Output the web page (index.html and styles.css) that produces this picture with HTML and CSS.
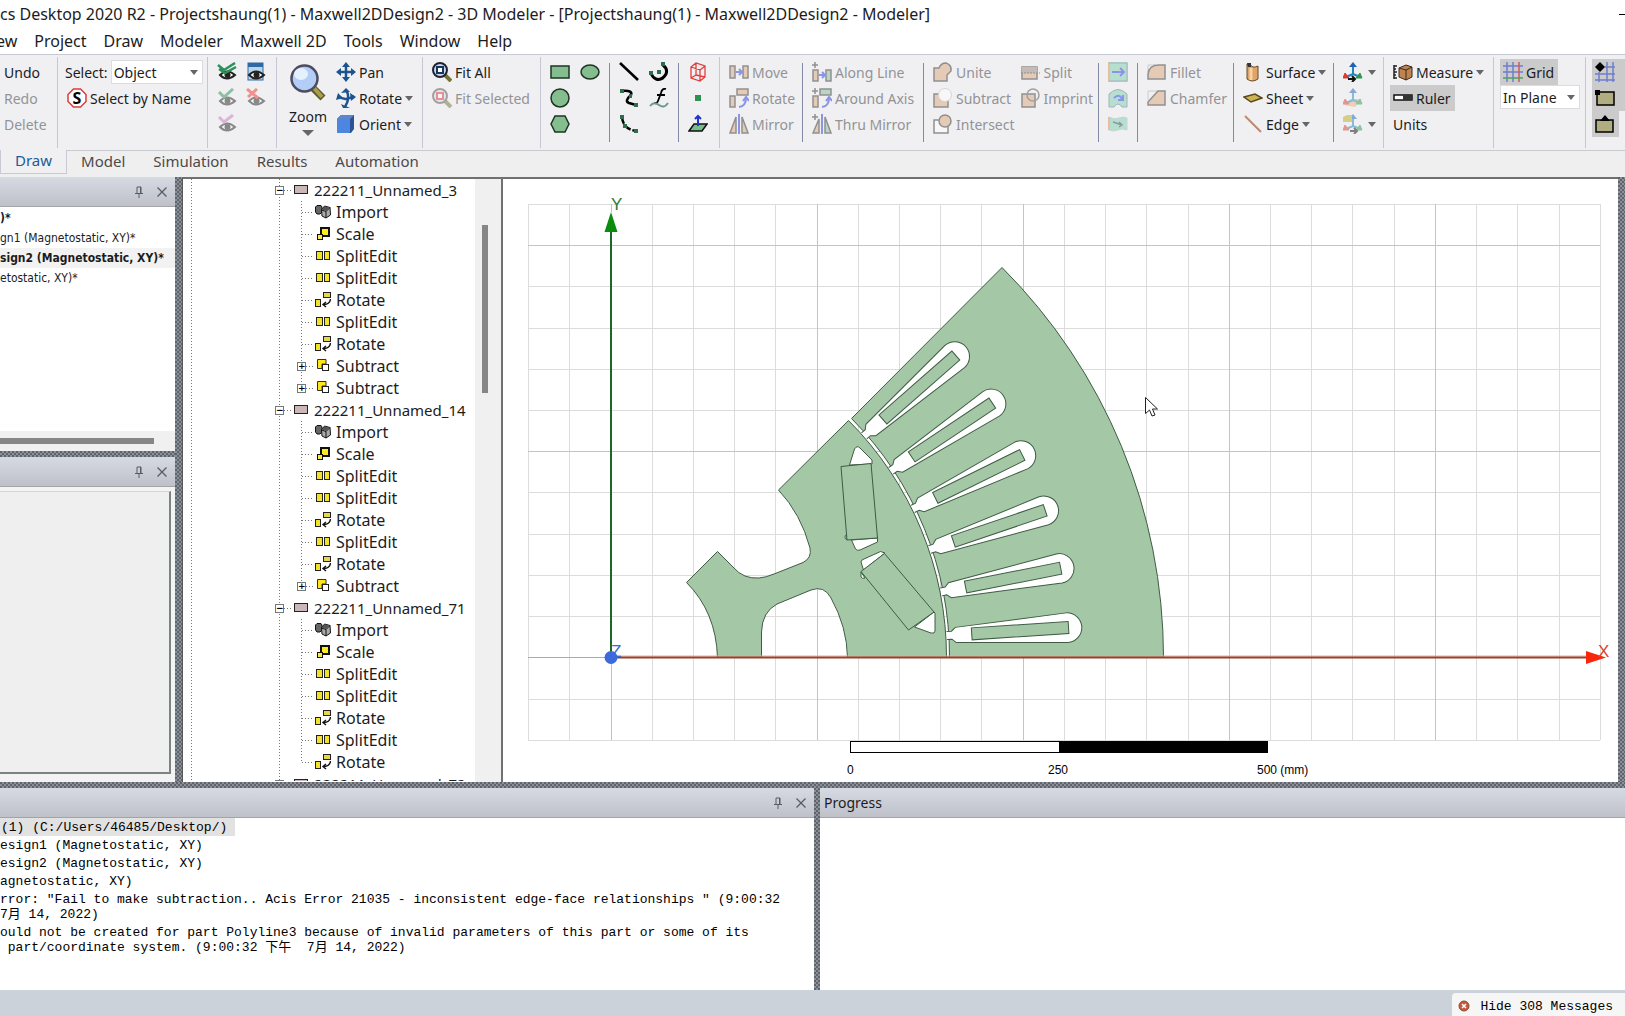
FILE: index.html
```
<!DOCTYPE html>
<html lang="en">
<head>
  <meta charset="UTF-8">
  <meta name="viewport" content="width=device-width, initial-scale=1">
  <title>Maxwell2DDesign2 - Modeler</title>
  <link rel="stylesheet" href="styles.css">
</head>
<body>

  <!-- Shared icons -->
  <svg class="sprite" aria-hidden="true">
    <symbol id="i-eye" viewBox="0 0 20 20">
      <path d="M3 13Q10 6 18 13Q10 20 3 13Z" fill="#fff" stroke="#222" stroke-width="2"/>
      <circle cx="10.500" cy="13" r="3" fill="#222"/>
    </symbol>
    <symbol id="i-pin" viewBox="0 0 10 12">
      <path d="M3 1H7V7M3 1V7M1 7.500H9M5 7.500V12M6.500 1V7" fill="none" stroke="#555c66"/>
    </symbol>
    <symbol id="i-close" viewBox="0 0 10 10">
      <path d="M0.500 0.500L9.500 9.500M9.500 0.500L0.500 9.500" stroke="#555c66" stroke-width="1.300"/>
    </symbol>
    <symbol id="i-object" viewBox="0 0 16 16">
      <rect x="1.500" y="3.500" width="13" height="8" fill="#cbb7b7" stroke="#2b2020"/>
    </symbol>
    <symbol id="i-import" viewBox="0 0 16 16">
      <path d="M0.500 3L2 1.500H6L7 3V8L5 10H2L0.500 8Z" fill="#666" stroke="#111"/>
      <path d="M6.500 6L9.500 2L15 3.500L15.500 11L11 14L7 12Z" fill="#aaa" stroke="#111"/>
      <path d="M6.500 6L11 7.500L15 3.500M11 7.500V14" fill="none" stroke="#111"/>
      <path d="M7 5.500L9.500 2.500L14.500 3.500L11 7Z" fill="#555"/>
    </symbol>
    <symbol id="i-scale" viewBox="0 0 16 16">
      <rect x="6" y="2" width="8" height="8" fill="#ffec1c" stroke="#111" stroke-width="2"/>
      <rect x="2.500" y="8.500" width="5" height="5" fill="#ffe94a" stroke="#111"/>
    </symbol>
    <symbol id="i-split" viewBox="0 0 16 16">
      <rect x="1.500" y="3.500" width="6" height="8" fill="#f2e22c" stroke="#222"/>
      <rect x="9.500" y="3.500" width="5" height="8" fill="#f2e22c" stroke="#222"/>
    </symbol>
    <symbol id="i-rotate" viewBox="0 0 16 16">
      <rect x="8.500" y="0.500" width="7" height="5" fill="#e6d84c" stroke="#222"/>
      <rect x="0.500" y="7.500" width="5" height="7" fill="#f2e22c" stroke="#222"/>
      <path d="M15.500 7Q15 12 9 12.500M11 10L8 12.500L11 15" fill="none" stroke="#111" stroke-width="1.400"/>
    </symbol>
    <symbol id="i-subtract" viewBox="0 0 16 16">
      <path d="M2.500 1.500H11V6H7V10.500H2.500Z" fill="#ffe61c" stroke="#332"/>
      <rect x="7.500" y="6.500" width="6" height="6" fill="#fff" stroke="#222"/>
    </symbol>
    <symbol id="i-axes" viewBox="0 0 20 20">
      <path d="M10 12V3M10 12L3 15M10 12L17 15" stroke-width="2" fill="none" stroke="#28b"/>
      <path d="M10 0L14 5H6Z" fill="#1e62b8"/>
      <path d="M0 16L2 11L6 16Z" fill="#d83c2c" stroke="#d83c2c"/>
      <path d="M19 16L13 16L17 11Z" fill="#2c9a4a" stroke="#2c9a4a"/>
    </symbol>
  </svg>

  <header class="title-bar">
    <h1>cs Desktop 2020 R2 - Projectshaung(1) - Maxwell2DDesign2 - 3D Modeler - [Projectshaung(1) - Maxwell2DDesign2 - Modeler]</h1>
    <button class="minimize" aria-label="Minimize"></button>
  </header>

  <nav class="menu-bar">
    <button>ew</button>
    <button>Project</button>
    <button>Draw</button>
    <button>Modeler</button>
    <button>Maxwell 2D</button>
    <button>Tools</button>
    <button>Window</button>
    <button>Help</button>
  </nav>

  <section class="ribbon">
    <div class="group first">
      <div class="col">
        <button>Undo</button>
        <button disabled>Redo</button>
        <button disabled>Delete</button>
      </div>
    </div>

    <div class="group major">
      <div class="col">
        <div class="field">
          <label for="selectMode">Select:</label>
          <select id="selectMode" class="mode"><option>Object</option></select>
        </div>
        <button>
          <svg viewBox="0 0 20 20"><path d="M6.500 1H13.500L19 6.500V13.500L13.500 19H6.500L1 13.500V6.500Z" fill="#fff" stroke="#dc3b3b" stroke-width="1.500"/><text x="10" y="16" class="s-mark">S</text></svg>
          Select by Name
        </button>
      </div>
    </div>

    <div class="group major wide-gap">
      <div class="col">
        <button aria-label="Show selected"><svg viewBox="0 0 20 20"><use href="#i-eye"/><path d="M1 3L7 8L18 1M2 7L8 11L19 5" fill="none" stroke="#2b9158" stroke-width="2.500"/></svg></button>
        <button aria-label="Show in active view" disabled><svg viewBox="0 0 20 20"><use href="#i-eye"/><path d="M2 4L7 9L16 1" fill="none" stroke="#2b9158" stroke-width="3"/></svg></button>
        <button aria-label="Show all" disabled><svg viewBox="0 0 20 20"><use href="#i-eye"/><path d="M2 3L7 8L16 1" fill="none" stroke="#c77cc0" stroke-width="3"/></svg></button>
      </div>
      <div class="col">
        <button aria-label="Visibility"><svg viewBox="0 0 20 20"><rect x="2" y="1" width="15" height="17" fill="#b8d4ee" stroke="#2d6aa3"/><rect x="2" y="1" width="15" height="4" fill="#2d6aa3"/><use href="#i-eye"/></svg></button>
        <button aria-label="Hide" disabled><svg viewBox="0 0 20 20"><use href="#i-eye"/><path d="M1 1L12 10M11 1L2 9" stroke="#f0352a" stroke-width="3"/></svg></button>
      </div>
    </div>

    <div class="group major">
      <button class="big">
        <svg viewBox="0 0 36 40"><path d="M22 24L33 35" stroke="#5e5b2a" stroke-width="7"/><path d="M24 25L32 34" stroke="#a89e4c" stroke-width="4"/><circle cx="14.500" cy="15.500" r="13" fill="#b4cdf6" stroke="#4c4c60" stroke-width="2.500"/><ellipse cx="11" cy="11" rx="7" ry="6" fill="#e6f1ff"/></svg>
        Zoom
        <i class="arrow large"></i>
      </button>
      <div class="col">
        <button><svg viewBox="0 0 20 20"><path d="M10 2V18M2 10H18" stroke="#1c5391" stroke-width="2.500"/><path d="M10 0L14 5H6ZM10 20L14 15H6ZM0 10L5 6V14ZM20 10L15 6V14Z" fill="#1c5391"/></svg>Pan</button>
        <button><svg viewBox="0 0 20 20"><path d="M10 2Q15 9 9 19M2 8Q9 14 18 8" fill="none" stroke="#1c5391" stroke-width="2.500"/><path d="M5 5L10 0L14 4ZM5 16L7 20H14ZM0 12L2 5L7 10ZM14 5L20 9L15 13Z" fill="#1c5391"/></svg>Rotate <i class="arrow"></i></button>
        <button><svg viewBox="0 0 20 20"><path d="M1 5L5 1H18V15L15 19H1Z" fill="#2c5392"/><path d="M1 5H14V19H1Z" fill="#4d86e0"/><path d="M1 5L5 1H18L14 5Z" fill="#5b86cf"/></svg>Orient <i class="arrow"></i></button>
      </div>
    </div>

    <div class="group major">
      <div class="col">
        <button><svg viewBox="0 0 20 20"><path d="M13 13L19 19" stroke="#77743a" stroke-width="4"/><circle cx="8" cy="8" r="7" fill="#c8d8ee" stroke="#223" stroke-width="2"/><rect x="5" y="5" width="6" height="6" fill="#fff" stroke="#17365e" stroke-width="2"/></svg>Fit All</button>
        <button disabled><svg viewBox="0 0 20 20"><path d="M13 13L19 19" stroke="#77743a" stroke-width="4"/><circle cx="8" cy="8" r="7" fill="#dde" stroke="#555" stroke-width="2"/><rect x="5" y="5" width="6" height="6" fill="#fff" stroke="#d33" stroke-width="2"/></svg>Fit Selected</button>
      </div>
    </div>

    <div class="group major shapes">
      <div class="col">
        <button aria-label="Rectangle"><svg viewBox="0 0 20 20"><rect x="1" y="4" width="18" height="12"/></svg></button>
        <button aria-label="Circle"><svg viewBox="0 0 20 20"><circle cx="10" cy="10" r="9"/></svg></button>
        <button aria-label="Polygon"><svg viewBox="0 0 20 20"><path d="M5 2H15L19 10L15 18H5L1 10Z"/></svg></button>
      </div>
      <div class="col">
        <button aria-label="Ellipse"><svg viewBox="0 0 20 20"><ellipse cx="10" cy="10" rx="9" ry="7"/></svg></button>
      </div>
    </div>

    <div class="group curves">
      <div class="col">
        <button aria-label="Line"><svg viewBox="0 0 20 20"><path d="M1 1L19 18" stroke-width="2.500"/></svg></button>
        <button aria-label="Spline"><svg viewBox="0 0 20 20"><path d="M3 3Q14 2 12 7Q5 13 10 15L17 17" stroke-width="2.500"/><path d="M1 1H5V5H1ZM10 6H13V10H10ZM15 15H19V19H15Z" class="node"/></svg></button>
        <button aria-label="Arc"><svg viewBox="0 0 20 20"><path d="M3 3Q4 15 17 17" stroke-width="2.500" stroke-dasharray="7 2"/><path d="M1 1H5V5H1ZM4 10H8V14H4ZM15 15H19V19H15Z" class="node"/></svg></button>
      </div>
      <div class="col">
        <button aria-label="Center point arc"><svg viewBox="0 0 20 20"><path d="M14 3Q19 7 17 12Q13 19 7 17Q3 15 2 11" stroke-width="3"/><path d="M12 0H16V4H12ZM8 8H12V12H8ZM0 9H4V13H0Z" class="node"/></svg></button>
        <button aria-label="Equation curve"><svg viewBox="0 0 20 20"><path d="M17 1Q13 0 12 5L9 13Q8 16 5 15M8 7H16" stroke-width="1.800"/><path d="M1 18Q5 13 10 17T19 15" class="wave"/></svg></button>
      </div>
    </div>

    <div class="group">
      <div class="col">
        <button aria-label="Region"><svg viewBox="0 0 20 20"><path d="M3 5L8 1L17 4V15L12 19L3 16ZM3 5L12 8V19M12 8L17 4M8 1V13L3 16M8 13L17 15" fill="none" stroke="#e33c3c" stroke-width="1.300"/></svg></button>
        <button aria-label="Point"><svg viewBox="0 0 20 20"><rect x="7" y="7" width="6" height="6" fill="#2f9050"/></svg></button>
        <button aria-label="Plane"><svg viewBox="0 0 20 20"><path d="M1 17L6 10H19L14 17Z" fill="#77bd89" stroke="#111" stroke-width="1.500"/><path d="M10 12V3M7 5L10 2L13 5" fill="none" stroke="#2434d0" stroke-width="2"/></svg></button>
      </div>
    </div>

    <div class="group major edit">
      <div class="col">
        <button disabled><svg viewBox="0 0 20 20"><path d="M1 4H6V16H1ZM14 4H19V16H14Z" class="tan"/><path d="M7 10H13M10 7L13 10L10 13" class="blue"/></svg>Move</button>
        <button disabled><svg viewBox="0 0 20 20"><path d="M1 8H6V19H1ZM8 1H19V7H8Z" class="tan"/><path d="M10 19Q17 18 17 10M14 13L17 9L20 13" class="blue"/></svg>Rotate</button>
        <button disabled><svg viewBox="0 0 20 20"><path d="M7 3V19H1ZM13 3V19H19Z" class="tan"/><path d="M10 0V20" class="blue"/></svg>Mirror</button>
      </div>
    </div>

    <div class="group edit">
      <div class="col">
        <button disabled><svg viewBox="0 0 20 20"><path d="M1 8H6V19H1Z" class="tan"/><path d="M14 8H19V19H14Z" class="mint"/><path d="M7 13H13M10 10L13 13L10 16" class="blue"/><path d="M3 0V6M0 3H6" class="plus"/></svg>Along Line</button>
        <button disabled><svg viewBox="0 0 20 20"><path d="M1 8H6V19H1Z" class="tan"/><path d="M8 1H19V7H8Z" class="mint"/><path d="M10 19Q17 18 17 10M14 13L17 9L20 13" class="blue"/><path d="M3 0V6M0 3H6" class="plus"/></svg>Around Axis</button>
        <button disabled><svg viewBox="0 0 20 20"><path d="M7 5V19H1Z" class="tan"/><path d="M13 3V19H19Z" class="mint"/><path d="M10 0V20" class="blue"/><path d="M3 0V6M0 3H6" class="plus"/></svg>Thru Mirror</button>
      </div>
    </div>

    <div class="group edit">
      <div class="col">
        <button disabled><svg viewBox="0 0 20 20"><path d="M1 6H6Q8 1 13 1Q19 3 18 9L14 13V19H1Z" class="tan"/></svg>Unite</button>
        <button disabled><svg viewBox="0 0 20 20"><path d="M1 6H15V19H1Z" class="tan"/><circle cx="12" cy="7" r="6.500" fill="#fff" stroke="#bbb"/></svg>Subtract</button>
        <button disabled><svg viewBox="0 0 20 20"><path d="M1 6H15V19H1Z" fill="#fff" stroke="#333" stroke-width="1.500"/><circle cx="12" cy="7" r="6" class="tan"/></svg>Intersect</button>
      </div>
      <div class="col">
        <button disabled><svg viewBox="0 0 20 20"><path d="M1 5H16V17H1Z" class="tan"/><path d="M1 5H16V11H1Z" fill="#9b8878"/><path d="M0 11H19" stroke="#333" stroke-dasharray="2 1"/></svg>Split</button>
        <button disabled><svg viewBox="0 0 20 20"><path d="M1 6H14V19H1Z" class="tan"/><circle cx="12" cy="7" r="6" fill="none" stroke="#555" stroke-width="1.500"/></svg>Imprint</button>
      </div>
    </div>

    <div class="group edit">
      <div class="col">
        <button aria-label="Sweep along vector" disabled><svg viewBox="0 0 20 20"><rect width="20" height="20" fill="#7fd0b0"/><path d="M1 0V20" stroke="#e09050" stroke-width="2"/><path d="M1 1H19V19H1" fill="none" stroke="#578"/><path d="M4 10H16M12 6L16 10L12 14" class="blue"/></svg></button>
        <button aria-label="Sweep around axis" disabled><svg viewBox="0 0 20 20"><path d="M1 6Q10 -3 19 6V19H14Q10 13 6 19H1Z" fill="#7fd0b0" stroke="#578"/><path d="M6 10Q11 5 14 11M15 7V12H10" class="blue"/></svg></button>
        <button aria-label="Sweep along path" disabled><svg viewBox="0 0 20 20"><path d="M1 3Q6 6 11 4T19 4V16Q14 14 10 16T1 16Z" fill="#7fd0b0" stroke="#9bb"/><path d="M1 3V16" stroke="#e09050" stroke-width="2"/><path d="M5 8L14 11M11 8L14 11L11 13" fill="none" stroke="#245" stroke-width="1.500"/></svg></button>
      </div>
    </div>

    <div class="group edit">
      <div class="col">
        <button disabled><svg viewBox="0 0 20 20"><path d="M1 3H8M1 3V10" stroke="#aaa"/><path d="M1 17V12Q2 3 12 3H18V17Z" class="tan"/></svg>Fillet</button>
        <button disabled><svg viewBox="0 0 20 20"><path d="M1 3H12M1 3V12" stroke="#aaa"/><path d="M1 17V14L11 3H18V17Z" class="tan"/></svg>Chamfer</button>
      </div>
    </div>

    <div class="group">
      <div class="col">
        <button><svg viewBox="0 0 20 20"><path d="M4 2V17Q9 21 15 17V4Q9 7 7 2Z" fill="#e0a368" stroke="#6b4a28"/><path d="M8 6V18" stroke="#f7d3a5" stroke-width="3"/><path d="M4 1H8V5H5Z" fill="#333"/></svg>Surface <i class="arrow"></i></button>
        <button><svg viewBox="0 0 20 20"><path d="M1 9L12 6L19 10L8 14Z" fill="#cdb452" stroke="#59481c" stroke-width="1.500"/></svg>Sheet <i class="arrow"></i></button>
        <button><svg viewBox="0 0 20 20"><path d="M2 2L18 18" stroke="#b98970" stroke-width="2"/></svg>Edge <i class="arrow"></i></button>
      </div>
    </div>

    <div class="group">
      <div class="col">
        <button aria-label="Relative CS"><svg viewBox="0 0 20 20"><use href="#i-axes"/><path d="M5 17H12M9 14L12 17L9 20" fill="none" stroke="#111" stroke-width="2"/></svg><i class="arrow far"></i></button>
        <button aria-label="Face CS" disabled><svg viewBox="0 0 20 20"><path d="M1 17L8 11H19L12 19Z" fill="#f0b070"/><use href="#i-axes"/></svg></button>
        <button aria-label="Object CS"><svg class="dim" viewBox="0 0 20 20"><use href="#i-axes"/><path d="M0 3L4 1H9V8H0Z" fill="#b9b020"/><path d="M7 17H14M11 14L14 17L11 20" fill="none" stroke="#111" stroke-width="2"/></svg><i class="arrow far"></i></button>
      </div>
    </div>

    <div class="group major">
      <div class="col">
        <button><svg viewBox="0 0 20 20"><path d="M1 3V17M1 4H4M1 7H3M1 10H4M1 13H3M1 16H4" stroke="#222" stroke-width="1.500"/><path d="M6 6L13 3L19 5V15L13 18L6 15Z" fill="#bd8453" stroke="#3f2915"/><path d="M6 6L13 8L19 5M13 8V18" fill="none" stroke="#3f2915"/></svg>Measure <i class="arrow"></i></button>
        <button class="on"><svg viewBox="0 0 20 20"><rect x="1" y="7" width="18" height="5" fill="#fff" stroke="#111" stroke-width="1.500"/><rect x="10" y="7" width="9" height="5" fill="#333"/></svg>Ruler</button>
        <button>Units</button>
      </div>
    </div>

    <div class="group major">
      <div class="col">
        <button class="on"><svg viewBox="0 0 20 20"><path d="M4 0V20M10 0V20M0 4H20M0 10H20" stroke="#6f7fcf" stroke-width="1.500"/><path d="M16 0V20" stroke="#d05858" stroke-width="1.500"/><path d="M0 16H20" stroke="#4f9f60" stroke-width="1.500"/></svg>Grid</button>
        <select class="plane" aria-label="Grid plane"><option>In Plane</option></select>
      </div>
    </div>

    <div class="group major last">
      <div class="col">
        <button class="on wide" aria-label="Snap to grid"><svg viewBox="0 0 20 20"><path d="M12 0V20M18 0V20M4 10V20M0 12H20M0 18H20M10 5H20" stroke="#6f7fcf" stroke-width="1.500"/><path d="M5 0L10 5L5 10L0 5Z" fill="#000"/></svg></button>
        <button class="on wide" aria-label="Snap to vertex"><svg viewBox="0 0 20 20"><rect x="2" y="4" width="17" height="13" fill="#b0ad80" stroke="#000" stroke-width="1.500"/><rect width="5" height="5" x="0" y="2"/></svg></button>
        <button class="on" aria-label="Snap to edge center"><svg viewBox="0 0 20 20"><rect x="1" y="6" width="17" height="12" fill="#b0ad80" stroke="#000" stroke-width="1.500"/><path d="M10 1L15 7H5Z"/></svg></button>
      </div>
    </div>
  </section>

  <nav class="ribbon-tabs">
    <button class="active">Draw</button>
    <button>Model</button>
    <button>Simulation</button>
    <button>Results</button>
    <button>Automation</button>
  </nav>

  <main class="workspace">
    <aside class="left-dock">
      <section class="project">
        <div class="pane-title">
          <button aria-label="Pin"><svg class="pin"><use href="#i-pin"/></svg></button>
          <button aria-label="Close"><svg class="close"><use href="#i-close"/></svg></button>
        </div>
        <ul class="designs">
          <li class="strong">)*</li>
          <li>gn1 (Magnetostatic, XY)*</li>
          <li class="strong selected">sign2 (Magnetostatic, XY)*</li>
          <li>etostatic, XY)*</li>
        </ul>
        <div class="scroll-x"></div>
      </section>
      <div class="splitter horizontal"></div>
      <section class="properties">
        <div class="pane-title">
          <button aria-label="Pin"><svg class="pin"><use href="#i-pin"/></svg></button>
          <button aria-label="Close"><svg class="close"><use href="#i-close"/></svg></button>
        </div>
        <div class="property-box"></div>
      </section>
    </aside>

    <div class="splitter"></div>

    <section class="history">
      <ul class="tree">
        <li>
          <div class="node"><b class="box">−</b><svg><use href="#i-object"/></svg>222211_Unnamed_3</div>
          <ul>
            <li><svg><use href="#i-import"/></svg>Import</li>
            <li><svg><use href="#i-scale"/></svg>Scale</li>
            <li><svg><use href="#i-split"/></svg>SplitEdit</li>
            <li><svg><use href="#i-split"/></svg>SplitEdit</li>
            <li><svg><use href="#i-rotate"/></svg>Rotate</li>
            <li><svg><use href="#i-split"/></svg>SplitEdit</li>
            <li><svg><use href="#i-rotate"/></svg>Rotate</li>
            <li class="closed"><b class="box">+</b><svg><use href="#i-subtract"/></svg>Subtract</li>
            <li class="closed"><b class="box">+</b><svg><use href="#i-subtract"/></svg>Subtract</li>
          </ul>
        </li>
        <li>
          <div class="node"><b class="box">−</b><svg><use href="#i-object"/></svg>222211_Unnamed_14</div>
          <ul>
            <li><svg><use href="#i-import"/></svg>Import</li>
            <li><svg><use href="#i-scale"/></svg>Scale</li>
            <li><svg><use href="#i-split"/></svg>SplitEdit</li>
            <li><svg><use href="#i-split"/></svg>SplitEdit</li>
            <li><svg><use href="#i-rotate"/></svg>Rotate</li>
            <li><svg><use href="#i-split"/></svg>SplitEdit</li>
            <li><svg><use href="#i-rotate"/></svg>Rotate</li>
            <li class="closed"><b class="box">+</b><svg><use href="#i-subtract"/></svg>Subtract</li>
          </ul>
        </li>
        <li>
          <div class="node"><b class="box">−</b><svg><use href="#i-object"/></svg>222211_Unnamed_71</div>
          <ul>
            <li><svg><use href="#i-import"/></svg>Import</li>
            <li><svg><use href="#i-scale"/></svg>Scale</li>
            <li><svg><use href="#i-split"/></svg>SplitEdit</li>
            <li><svg><use href="#i-split"/></svg>SplitEdit</li>
            <li><svg><use href="#i-rotate"/></svg>Rotate</li>
            <li><svg><use href="#i-split"/></svg>SplitEdit</li>
            <li><svg><use href="#i-rotate"/></svg>Rotate</li>
          </ul>
        </li>
        <li>
          <div class="node"><b class="box">+</b><svg><use href="#i-object"/></svg>222211_Unnamed_72</div>
        </li>
      </ul>
      <div class="scroll-y"></div>
    </section>

    <section class="modeler">
      <svg viewBox="503 179 1114 603" preserveAspectRatio="xMinYMin meet">
        <defs>
          <g id="slot">
            <path d="M336 -4L341 -4L345 -7.600L456.500 -14.800A14.800 14.800 0 0 1 456.500 14.800L345 7.600L341 4L336 4" fill="#fff"/>
            <rect x="361" y="-6" width="97" height="12"/>
          </g>
        </defs>

        <!-- Grid -->
        <path class="grid" d="M528.500 204V740M569.500 204V740M652.500 204V740M693.500 204V740M734.500 204V740M775.500 204V740M858.500 204V740M899.500 204V740M940.500 204V740M981.500 204V740M1064.500 204V740M1105.500 204V740M1146.500 204V740M1188.500 204V740M1270.500 204V740M1311.500 204V740M1352.500 204V740M1394.500 204V740M1476.500 204V740M1517.500 204V740M1559.500 204V740M1600.500 204V740"/>
        <path class="grid" d="M528 204.500H1600M528 286.500H1600M528 328.500H1600M528 369.500H1600M528 410.500H1600M528 492.500H1600M528 534.500H1600M528 575.500H1600M528 616.500H1600M528 699.500H1600M528 740.500H1600"/>
        <path class="grid main" d="M817.500 204V740M1023.500 204V740M1229.500 204V740M1435.500 204V740M528 245.500H1600M528 451.500H1600"/>
        <path d="M528 657.500H611" stroke="#8cc08c"/>
        <path d="M611.500 657V740M611.500 204V212" stroke="#d8b8b4"/>

        <!-- Rotor -->
        <g class="part">
          <path d="M848.500 420.500L778.500 490Q801 514 810 548Q812 558 803 562.500L774 574Q758 581 745 576Q738 573 734 568L717.500 551.500L686.500 582.500Q716 612 717.500 657.500H761.500V632Q762 612 777 604L811 590Q824 585 831 598Q847 627 847.500 657.500H946.500A335 335 0 0 0 848.500 420.500Z"/>
          <g fill="#fff">
            <path d="M849.500 465L854.500 449Q857 445 860 448L872 460V464Z"/>
            <path d="M851.500 540L855.500 549Q857 551 860 550L877.500 542V538Z"/>
            <path d="M847 534Q845 535 845 537T847 540Z"/>
            <path d="M863.500 570L861 562Q861 560 864 559L880.500 551.500L885 553Z"/>
            <path d="M861 572V577Q862 579 865 578Z"/>
            <path d="M914.500 627L931 633Q935 634 935 631V613L934 612Z"/>
          </g>
          <path d="M841 466.500L871 463.500L877.500 538L847 540Z"/>
          <path d="M884.500 553.500L934 612L908.500 630L861 571.500Z"/>
        </g>

        <!-- Stator with six slots -->
        <g class="part">
          <path d="M949.500 657.500H1163.500A552 552 0 0 0 1002 267.500L851.500 418.500A338 338 0 0 1 949.500 657.500Z"/>
          <g transform="translate(611.500 657.500)">
            <use href="#slot" transform="rotate(-3.750)"/>
            <use href="#slot" transform="rotate(-11.250)"/>
            <use href="#slot" transform="rotate(-18.750)"/>
            <use href="#slot" transform="rotate(-26.250)"/>
            <use href="#slot" transform="rotate(-33.750)"/>
            <use href="#slot" transform="rotate(-41.250)"/>
          </g>
        </g>

        <!-- Axes -->
        <path d="M611 656H1587" stroke="#f4a98c"/>
        <path d="M611 657.500H1587" stroke="#98402c" stroke-width="2"/>
        <path d="M1586 651L1606 657.500L1586 664Z" fill="#f9260c"/>
        <path d="M611 657V232" stroke="#1d6628" stroke-width="2"/>
        <path d="M604.500 232L611 212L617.500 232Z" fill="#0a8c0e"/>
        <circle cx="611" cy="657.500" r="6.500" fill="#3c69dc"/>
        <text class="axis" x="611" y="210" fill="#2c7a35">Y</text>
        <text class="axis" x="1598" y="657" fill="#e0402c">X</text>
        <text class="axis" x="611" y="657" fill="#3c69dc">Z</text>

        <!-- Scale bar -->
        <rect x="850.500" y="741.500" width="417" height="11" fill="#fff" stroke="#000"/>
        <rect x="1059" y="741" width="209" height="12"/>
        <text class="scale" x="847" y="774">0</text>
        <text class="scale" x="1048" y="774">250</text>
        <text class="scale" x="1257" y="774">500 (mm)</text>

        <path d="M1145.500 397.500V413.500L1149.500 410L1152 416L1155 415L1152.500 409H1157.500Z" fill="#fff" stroke="#222"/>
      </svg>
    </section>

    <div class="splitter"></div>
  </main>

  <div class="splitter horizontal"></div>

  <section class="bottom-dock">
    <section class="messages">
      <div class="pane-title">
        <button aria-label="Pin"><svg class="pin"><use href="#i-pin"/></svg></button>
        <button aria-label="Close"><svg class="close"><use href="#i-close"/></svg></button>
      </div>
      <ul>
        <li><span class="current">(1) (C:/Users/46485/Desktop/)</span></li>
        <li>esign1 (Magnetostatic, XY)</li>
        <li>esign2 (Magnetostatic, XY)</li>
        <li>agnetostatic, XY)</li>
        <li>rror: "Fail to make subtraction.. Acis Error 21035 - inconsistent edge-face relationships " (9:00:32
7月 14, 2022)</li>
        <li>ould not be created for part Polyline3 because of invalid parameters of this part or some of its
 part/coordinate system. (9:00:32 下午  7月 14, 2022)</li>
      </ul>
    </section>
    <div class="splitter"></div>
    <section class="progress">
      <div class="pane-title"><h2>Progress</h2></div>
    </section>
  </section>

  <footer class="status-bar">
    <button>
      <svg viewBox="0 0 12 12"><circle cx="6" cy="6" r="5" fill="#c4593a" stroke="#8d4a38"/><path d="M4 4L8 8M8 4L4 8" stroke="#fff" stroke-width="1.500"/></svg>
      Hide 308 Messages
    </button>
  </footer>

</body>
</html>
```
FILE: styles.css
```
* {
  box-sizing: border-box;
}

body {
  margin: 0;
  height: 100vh;
  display: flex;
  flex-direction: column;
  overflow: hidden;
  background: #fff;
  color: #1c1c1c;
  font-family: "Noto Sans", "Open Sans", sans-serif;
  font-size: 14px;
}

ul {
  list-style: none;
  margin: 0;
  padding: 0;
}

button {
  border: none;
  background: none;
  padding: 0;
  margin: 0;
  color: inherit;
  font: inherit;
  white-space: nowrap;
}

.sprite {
  display: none;
}

/* Title and menu */
.title-bar {
  display: flex;
  justify-content: space-between;
  align-items: center;
  height: 28px;
  flex: none;
}

.title-bar h1 {
  margin: 0;
  font-size: 16px;
  font-weight: normal;
  white-space: nowrap;
}

.minimize {
  width: 6px;
  height: 1px;
  background: #000;
}

.menu-bar {
  display: flex;
  gap: 17px;
  height: 26px;
  margin-left: -4px;
  flex: none;
  align-items: center;
  font-size: 16px;
  line-height: 20px;
}

/* Ribbon */
.ribbon {
  display: grid;
  grid-template-columns: 57px 150px 69px 146px 118px 69px 69px 41px 83px 121px 175px 39px 96px 100px 50px 110px 92px 1fr;
  flex: none;
  height: 97px;
  padding: 2px 0;
  background: #f0f0f2;
  border-top: 1px solid #c9c9d6;
  border-bottom: 1px solid #c9c9d0;
}

.group {
  display: flex;
  padding: 2px 0 0 6px;
  border-left: 1px solid transparent;
  border-image: linear-gradient(transparent 7px, #8289a5 7px 84px, transparent 84px) 1;
}

.group.major {
  border-image: none;
  border-left-color: #c6c6d4;
}

.group.first {
  border-image: none;
  padding-left: 0;
}

.wide-gap {
  gap: 3px;
}

.shapes,
.curves {
  gap: 4px;
}

.col {
  display: flex;
  flex-direction: column;
  align-items: flex-start;
}

.ribbon button {
  display: flex;
  align-items: center;
  gap: 3px;
  height: 26px;
  padding: 0 3px;
}

.ribbon button:disabled {
  color: #939396;
}

.ribbon button:disabled svg,
.ribbon .dim {
  opacity: 0.5;
}

.ribbon svg {
  width: 20px;
  height: 20px;
  flex: none;
}

.ribbon .on {
  background: #cbcbcb;
  padding-right: 4px;
}

.ribbon .wide {
  padding-right: 12px;
}

.ribbon .big {
  flex-direction: column;
  gap: 4px;
  height: 84px;
  width: 50px;
  padding: 4px 0 0;
}

.ribbon .big svg {
  width: 36px;
  height: 40px;
}

.arrow {
  border: 4px solid transparent;
  border-top: 5px solid #666;
  border-bottom: none;
}

.arrow.large {
  border-width: 6px 6px 0;
}

.arrow.far {
  margin-left: 2px;
}

.field {
  display: flex;
  align-items: center;
  gap: 3px;
  height: 26px;
  padding-left: 1px;
}

select {
  appearance: none;
  height: 24px;
  padding: 0 0 0 2px;
  border: 1px solid #dcdce0;
  border-radius: 0;
  background: #fff url("data:image/svg+xml,%3Csvg xmlns='http://www.w3.org/2000/svg' width='8' height='5'%3E%3Cpath d='M0 0H8L4 5Z' fill='%23666'/%3E%3C/svg%3E") no-repeat right 4px center;
  color: inherit;
  font: inherit;
}

.mode {
  width: 92px;
}

.plane {
  width: 80px;
}

.s-mark {
  font: bold 16px "Noto Sans", sans-serif;
  text-anchor: middle;
}

.shapes svg {
  fill: #84bd8e;
  stroke: #1f3325;
  stroke-width: 1.500;
}

.curves svg {
  fill: none;
  stroke: #000;
}

.curves .node {
  fill: #2d6e4c;
  stroke: none;
}

.curves .wave {
  stroke: #6c9a86;
  stroke-width: 2;
}

.tan {
  fill: #dba77c;
  stroke: #333;
  stroke-width: 1.500;
}

.mint {
  fill: #84bd9a;
  stroke: #333;
  stroke-width: 1.500;
}

.blue {
  fill: none;
  stroke: #2a3be0;
  stroke-width: 2;
}

.plus {
  stroke: #333;
  stroke-width: 1.500;
}

.ribbon-tabs {
  display: flex;
  flex: none;
  align-items: flex-start;
  height: 26px;
  background: #f0eff0;
  color: #4a4a4a;
  font-size: 15px;
}

.ribbon-tabs button {
  height: 23px;
  padding: 0 14px 4px;
  line-height: 18px;
}

.ribbon-tabs .active {
  margin-top: -1px;
  height: 24px;
  background: #f0f0f2;
  border: 1px solid #c9c9d6;
  border-top: none;
  color: #1d5b97;
}

/* Docked panes */
.workspace {
  display: flex;
  flex: 1;
  min-height: 0;
}

.splitter {
  flex: none;
  width: 7px;
  background: repeating-conic-gradient(#8b9099 0 25%, #5f646b 0 50%) 0 0 / 4px 4px;
}

.splitter.horizontal {
  width: auto;
  height: 6px;
}

.pane-title {
  display: flex;
  align-items: center;
  justify-content: flex-end;
  gap: 13px;
  flex: none;
  height: 30px;
  padding: 0 8px 0 4px;
  background: linear-gradient(#d6dae3, #bfc1c9);
  border-bottom: 1px solid #a3a3a8;
}

.pane-title button {
  display: flex;
}

.pane-title h2 {
  flex: 1;
  margin: 0;
  font-size: 14px;
  font-weight: normal;
}

.pin {
  width: 10px;
  height: 12px;
}

.close {
  width: 10px;
  height: 10px;
}

.left-dock {
  display: flex;
  flex-direction: column;
  flex: none;
  width: 175px;
}

.project {
  display: flex;
  flex-direction: column;
  height: 274px;
}

.designs {
  flex: 1;
  padding-top: 1px;
  font-family: "DejaVu Sans Condensed", "Noto Sans", sans-serif;
  font-size: 12px;
  line-height: 20px;
  white-space: nowrap;
  overflow: hidden;
}

.strong {
  font-weight: bold;
}

.selected {
  background: #f2f2f2;
}

.scroll-x {
  height: 20px;
  padding: 7px 21px 7px 0;
  background: #f0f0f0;
}

.scroll-x::before {
  content: "";
  display: block;
  height: 6px;
  background: #868686;
}

.properties {
  display: flex;
  flex-direction: column;
  flex: 1;
  background: #f3f3f3;
}

.property-box {
  flex: 1;
  margin: 4px 4px 8px 0;
  background: #efefef;
  border: 2px solid #7d837f;
  border-width: 1px 2px 2px 0;
  border-top-color: #d5d5d5;
}

/* Model history tree */
.history {
  display: flex;
  flex: none;
  width: 319px;
  padding-bottom: 1px;
  border-top: 2px solid #707070;
  border-left: 1px solid #555;
  background: #fff;
}

.tree {
  --dots: repeating-linear-gradient(#777 0 1px, transparent 1px 3px);
  --dash: repeating-linear-gradient(90deg, #777 0 1px, transparent 1px 3px);
  flex: 1;
  overflow: hidden;
  font-size: 16px;
  line-height: 22px;
  background: var(--dots) 8px 0 / 1px 100% no-repeat, var(--dots) 96px 0 / 1px 100% no-repeat;
}

.tree .node {
  display: flex;
  align-items: center;
  height: 22px;
  padding-left: 92px;
  font-size: 15px;
  background: var(--dash) 101px 11px / 8px 1px no-repeat;
}

.tree svg {
  width: 16px;
  height: 16px;
  flex: none;
  margin-right: 5px;
}

.tree .node svg {
  margin: 0 5px 0 9px;
}

.tree ul {
  margin-left: 118px;
  background: var(--dots) 0 0 / 1px calc(100% - 11px) no-repeat;
}

.tree ul li {
  display: flex;
  align-items: center;
  height: 22px;
  padding-left: 14px;
  background: var(--dash) 1px 11px / 12px 1px no-repeat;
}

.tree ul .closed {
  margin-left: -4px;
  padding-left: 0;
  background: var(--dash) 9px 11px / 8px 1px no-repeat;
}

.tree .closed svg {
  margin-left: 9px;
}

.box {
  flex: none;
  width: 9px;
  height: 9px;
  border: 1px solid #777;
  background: #fff;
  color: #000;
  font: bold 9px/7px "DejaVu Sans", sans-serif;
  text-align: center;
}

.scroll-y {
  width: 26px;
  margin-bottom: -1px;
  padding: 46px 13px 0 7px;
  background: #f0f0f0;
}

.scroll-y::before {
  content: "";
  display: block;
  height: 168px;
  background: #868686;
}

/* Drawing area */
.modeler {
  flex: 1;
  min-width: 0;
  border-top: 2px solid #707070;
  border-left: 2px solid #707070;
}

.modeler svg {
  display: block;
  width: 100%;
  height: 100%;
}

.grid {
  stroke: #dcdcdc;
}

.grid.main {
  stroke: #c4c4c4;
}

.part {
  fill: #a4c7a6;
  stroke: #3e5c44;
}

.axis {
  font: 17px "Liberation Sans", Arial, sans-serif;
}

.scale {
  font: 12px "Liberation Sans", Arial, sans-serif;
}

/* Messages and progress */
.bottom-dock {
  display: grid;
  grid-template-columns: 814fr 6px 805fr;
  flex: none;
  height: 202px;
}

.bottom-dock .splitter {
  width: auto;
}

.messages {
  min-width: 0;
  overflow: hidden;
}

.messages ul {
  font-family: "Liberation Mono", "Noto Sans CJK SC", monospace;
  font-size: 13px;
  line-height: 15px;
  color: #000;
}

.messages li {
  padding: 2px 0 1px;
  white-space: pre;
}

.messages .current {
  padding: 2px 8px 1px 1px;
  background: #e2e2e2;
}

.status-bar {
  display: flex;
  justify-content: flex-end;
  flex: none;
  height: 26px;
  padding-top: 3px;
  background: #ccd2da;
}

.status-bar button {
  display: flex;
  align-items: center;
  gap: 10px;
  padding: 3px 12px 0 6px;
  border-radius: 4px 0 0 0;
  background: #f6f6f7;
  color: #000;
  font-family: "Liberation Mono", monospace;
  font-size: 13px;
}

.status-bar svg {
  width: 12px;
  height: 12px;
}
```
